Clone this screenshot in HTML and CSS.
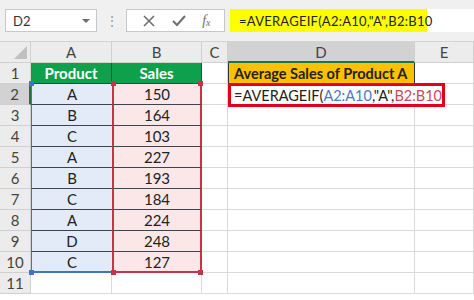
FILE: index.html
```html
<!doctype html>
<html lang="en">
  <head>
    <meta charset="UTF-8" />
    <title>AVERAGEIF</title>
    <link rel="stylesheet" href="styles.css">
  </head>
  <body>
    <div class="toolbar">
      <div class="namebox">
        <span>D2</span>
        <span class="caret"></span>
      </div>
      <div class="grip">⋮</div>
      <div class="fbuttons">
        <svg width="14" height="14" viewBox="0 0 14 14"><path d="M2 2 L12 12 M12 2 L2 12" stroke="#6e6e6e" stroke-width="1.6" fill="none"/></svg>
        <svg width="16" height="14" viewBox="0 0 16 14"><path d="M2 7 L6 11 L14 2" stroke="#6e6e6e" stroke-width="2" fill="none"/></svg>
        <span class="fx">f<sub>x</sub></span>
      </div>
      <div class="formula">
        <span class="hl">=AVERAGEIF(A2:A10,"A",B2:B10</span>
      </div>
    </div>

    <div class="sheet">
      <div class="corner"></div>
      <div class="ch">A</div>
      <div class="ch">B</div>
      <div class="ch">C</div>
      <div class="ch sel">D</div>
      <div class="ch">E</div>

      <div class="rh">1</div>
      <div class="cell hd">Product</div>
      <div class="cell hd">Sales</div>
      <div class="cell"></div>
      <div class="cell avg">Average Sales of Product A</div>
      <div class="cell"></div>

      <div class="rh sel">2</div>
      <div class="cell a first">A</div>
      <div class="cell b first">150</div>
      <div class="cell"></div>
      <div class="cell edit">
        <div class="editbox">=AVERAGEIF(<span class="ref-a">A2:A10</span>,"A",<span class="ref-b">B2:B10</span></div>
      </div>
      <div class="cell"></div>

      <div class="rh">3</div>
      <div class="cell a">B</div>
      <div class="cell b">164</div>
      <div class="cell"></div>
      <div class="cell"></div>
      <div class="cell"></div>

      <div class="rh">4</div>
      <div class="cell a">C</div>
      <div class="cell b">103</div>
      <div class="cell"></div>
      <div class="cell"></div>
      <div class="cell"></div>

      <div class="rh">5</div>
      <div class="cell a">A</div>
      <div class="cell b">227</div>
      <div class="cell"></div>
      <div class="cell"></div>
      <div class="cell"></div>

      <div class="rh">6</div>
      <div class="cell a">B</div>
      <div class="cell b">193</div>
      <div class="cell"></div>
      <div class="cell"></div>
      <div class="cell"></div>

      <div class="rh">7</div>
      <div class="cell a">C</div>
      <div class="cell b">184</div>
      <div class="cell"></div>
      <div class="cell"></div>
      <div class="cell"></div>

      <div class="rh">8</div>
      <div class="cell a">A</div>
      <div class="cell b">224</div>
      <div class="cell"></div>
      <div class="cell"></div>
      <div class="cell"></div>

      <div class="rh">9</div>
      <div class="cell a">D</div>
      <div class="cell b">248</div>
      <div class="cell"></div>
      <div class="cell"></div>
      <div class="cell"></div>

      <div class="rh">10</div>
      <div class="cell a last">C</div>
      <div class="cell b last">127</div>
      <div class="cell"></div>
      <div class="cell"></div>
      <div class="cell"></div>

      <div class="rh">11</div>
      <div class="cell"></div>
      <div class="cell"></div>
      <div class="cell"></div>
      <div class="cell"></div>
      <div class="cell"></div>
    </div>
  </body>
</html>
```

FILE: styles.css
```css
* {
  box-sizing: border-box;
}
body {
  margin: 0;
  font-family: Lato, "Liberation Sans", sans-serif;
  background: #ffffff;
  width: 474px;
  height: 300px;
  overflow: hidden;
}
.toolbar {
  height: 42px;
  background: #f0f0f0;
  display: flex;
  align-items: center;
  padding: 0 0 0 5px;
  border-bottom: 1px solid #d4d4d4;
}
.namebox {
  width: 92px;
  height: 23px;
  background: #fff;
  border: 1px solid #c8c8c8;
  display: flex;
  align-items: center;
  justify-content: space-between;
  padding: 0 6px 0 7px;
  font-size: 13px;
  color: #333;
}
.caret {
  width: 0;
  height: 0;
  border-left: 4px solid transparent;
  border-right: 4px solid transparent;
  border-top: 4px solid #6e6e6e;
}
.grip {
  width: 29px;
  text-align: center;
  color: #a0a0a0;
  font-size: 14px;
}
.fbuttons {
  width: 99px;
  height: 23px;
  background: #fff;
  border: 1px solid #c8c8c8;
  display: flex;
  align-items: center;
  justify-content: space-around;
  padding: 0 6px 0 8px;
}
.fx {
  font-family: "Liberation Serif", serif;
  font-style: italic;
  font-size: 14px;
  color: #6e6e6e;
}
.fx sub {
  font-size: 10px;
  vertical-align: -1px;
}
.formula {
  flex: 1;
  height: 23px;
  margin-left: 5px;
  background: #fff;
}
.hl {
  display: block;
  width: 197px;
  height: 23px;
  background: #ffff00;
  padding: 4px 0 0 9px;
  font-size: 13px;
  letter-spacing: 0.25px;
  color: #222;
  white-space: nowrap;
}
.sheet {
  display: grid;
  grid-template-columns: 31px 81px 90px 26px 187px 1fr;
  grid-auto-rows: 21px;
}
.corner,
.ch,
.rh {
  background: #ececec;
  color: #444;
  font-size: 15px;
  border-right: 1px solid #d0d0d0;
  border-bottom: 1px solid #d0d0d0;
  display: flex;
  align-items: center;
  justify-content: center;
}
.corner {
  position: relative;
}
.corner::after {
  content: "";
  position: absolute;
  right: 3px;
  bottom: 3px;
  border-left: 13px solid transparent;
  border-bottom: 13px solid #c0c0c0;
}
.ch.sel {
  background: #d2d2d2;
  border-bottom: 2px solid #217346;
}
.rh.sel {
  background: #d2d2d2;
  border-right: 2px solid #217346;
}
.cell {
  border-right: 1px solid #dadada;
  border-bottom: 1px solid #dadada;
  font-size: 15px;
  color: #222;
  display: flex;
  align-items: center;
  justify-content: center;
  white-space: nowrap;
  position: relative;
}
.hd {
  background: #0fa04c;
  color: #fff;
  font-weight: bold;
  border-right: 1px solid #2e4a36;
  border-bottom: 1px solid #2e4a36;
}
.avg {
  background: #ffc000;
  font-weight: bold;
  font-size: 14.5px;
  justify-content: flex-start;
  padding-left: 5px;
  border: 1px solid #333;
  border-top: none;
}
.a {
  background: #e2ebf7;
  border-left: 1px solid #4472c4;
  border-right: none;
  border-bottom: 1px solid #3c4452;
}
.b {
  background: #fbe7e8;
  border-left: 2px solid #c8334a;
  border-right: 2px solid #c8334a;
  border-bottom: 1px solid #3c4452;
}
.a.last {
  border-bottom: 2px solid #4472c4;
}
.b.last {
  border-bottom: 2px solid #c8334a;
}
.first::before,
.first::after,
.last::before,
.last::after {
  content: "";
  position: absolute;
  width: 5px;
  height: 5px;
  z-index: 2;
}
.a::before,
.a::after {
  background: #4472c4;
}
.b::before,
.b::after {
  background: #c8334a;
}
.first::before {
  left: -3px;
  top: -3px;
}
.first::after {
  right: -3px;
  top: -3px;
}
.last::before {
  left: -3px;
  bottom: -4px;
}
.last::after {
  right: -3px;
  bottom: -4px;
}
.a.first::after,
.a.last::after {
  display: none;
}
.edit {
  justify-content: flex-start;
}
.editbox {
  position: absolute;
  left: 0;
  top: -1px;
  width: 217px;
  height: 24px;
  background: #fff;
  border: 3px solid #e3001b;
  padding-left: 3px;
  display: flex;
  align-items: center;
  font-size: 14.5px;
  color: #222;
  z-index: 3;
}
.ref-a {
  color: #4a78c6;
}
.ref-b {
  color: #c84a60;
}
```
